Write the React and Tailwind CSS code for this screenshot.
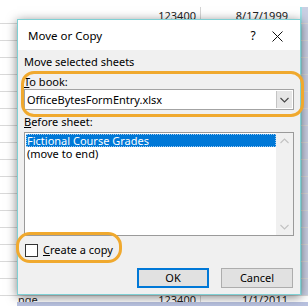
import React from "react";

const FONT = { fontFamily: '"Noto Sans", "Liberation Sans", sans-serif' };

const Chevron = ({ up, className }) => (
  <svg width="9" height="6" viewBox="0 0 9 6" className={className}>
    <path
      d={up ? "M0.5 5 L4.5 1 L8.5 5" : "M0.5 1 L4.5 5 L8.5 1"}
      fill="none"
      stroke="currentColor"
      strokeWidth="1.1"
    />
  </svg>
);

const SheetRow = ({ a, b, c }) => (
  <div className="flex h-[17px] border-b border-[#d9d9d9] text-[11px] leading-[17px] text-[#222]">
    <div className="w-[140px] px-[18px] truncate">{a}</div>
    <div className="w-[61px] border-r border-[#d4d4d4] text-right pr-[4px]">{b}</div>
    <div className="w-[99px] text-right pr-[12px]">{c}</div>
    <div className="flex-1 bg-[#c9cfe3] border-l-2 border-[#9fe0e6]" />
  </div>
);

export default function App() {
  return (
    <div className="relative w-[308px] h-[306px] overflow-hidden bg-white" style={FONT}>
      {/* spreadsheet behind */}
      <div className="flex flex-col mt-[7px]">
        <SheetRow a="" b="123400" c="8/17/1999" />
        {Array.from({ length: 16 }).map((_, i) => (
          <SheetRow key={i} a="" b="" c="" />
        ))}
      </div>
      <div className="absolute left-0 right-0 top-[295px] h-[7px] overflow-hidden flex text-[11px] text-[#222] leading-[12px]">
        <div className="w-[140px] pl-[18px] -mt-[1px]">nge</div>
        <div className="w-[61px] border-r border-[#d4d4d4] text-right pr-[4px] -mt-[1px]">123400</div>
        <div className="w-[99px] text-right pr-[12px] -mt-[1px]">1/1/2011</div>
      </div>
      <div className="absolute left-[17px] right-0 top-[302px] h-[4px] bg-[#b9c2e0]" />

      {/* dialog */}
      <div className="absolute left-[17px] top-[19px] w-[284px] h-[276px] border border-[#7fd0d4] bg-[#f0f0f0] flex flex-col shadow-[0_2px_10px_rgba(0,0,0,0.5)]">
        {/* title bar */}
        <div className="h-[30px] shrink-0 bg-white flex items-center pl-[10px] text-[11.5px] text-black">
          <span className="flex-1 mt-[2px]">Move or Copy</span>
          <span className="w-[46px] text-center text-[12px] -mr-[4px] mt-[2px]">?</span>
          <svg width="11" height="11" viewBox="0 0 11 11" className="mr-[17px] mt-[2px]">
            <path d="M0.5 0.5 L10.5 10.5 M10.5 0.5 L0.5 10.5" stroke="#111" strokeWidth="1" />
          </svg>
        </div>

        {/* body */}
        <div className="flex-1 flex flex-col px-[6px] text-[11px] leading-[14px] text-black">
          <div className="mt-[5px]">Move selected sheets</div>
          <div className="mt-[6px]">
            <span className="underline">T</span>o book:
          </div>
          <div className="h-[21px] shrink-0 flex border border-[#a3a3a3] bg-white">
            <div className="flex-1 pl-[2px] flex items-center">OfficeBytesFormEntry.xlsx</div>
            <div className="w-[16px] m-[1px] bg-[#e6e6e6] border-l border-[#c4c4c4] flex items-center justify-center text-[#444]">
              <Chevron />
            </div>
          </div>
          <div className="mt-[5px]">
            <span className="underline">B</span>efore sheet:
          </div>
          <div className="mt-[3px] h-[104px] shrink-0 flex border border-[#9a9a9a] bg-white">
            <div className="flex-1 flex flex-col pt-[1px] pl-[1px]">
              <div className="h-[13px] flex items-center bg-[#0078d7] text-white pl-[1px] outline outline-1 outline-dotted outline-[#9cc8ee] -outline-offset-1 overflow-hidden">
                <span className="leading-[12px]">Fictional Course Grades</span>
              </div>
              <div className="h-[14px] flex items-center pl-[1px] overflow-hidden">
                <span className="leading-[12px]">(move to end)</span>
              </div>
            </div>
            <div className="w-[17px] bg-[#f0f0f0] flex flex-col items-center justify-between py-[5px] text-[#c2c2c2]">
              <Chevron up />
              <Chevron />
            </div>
          </div>
          <div className="mt-[7px] flex items-center gap-[5px] pl-[1px]">
            <div className="w-[13px] h-[13px] border border-[#333] bg-white" />
            <span>
              <span className="underline">C</span>reate a copy
            </span>
          </div>
          <div className="mt-[11px] flex justify-end gap-[12px] pr-[1px]">
            <button className="w-[72px] h-[20px] bg-[#e1e1e1] border-2 border-[#0078d7] text-[11px] leading-[14px]">
              OK
            </button>
            <button className="w-[72px] h-[20px] bg-[#e1e1e1] border border-[#adadad] text-[11px] leading-[14px]">
              Cancel
            </button>
          </div>
        </div>
      </div>

      {/* annotation outlines */}
      <div className="absolute left-[21px] top-[71px] w-[283px] h-[46px] rounded-[13px] border-[3px] border-[#f0a92e]" />
      <div className="absolute left-[16px] top-[232px] w-[106px] h-[31px] rounded-[14px] border-[3px] border-[#f0a92e]" />
    </div>
  );
}
